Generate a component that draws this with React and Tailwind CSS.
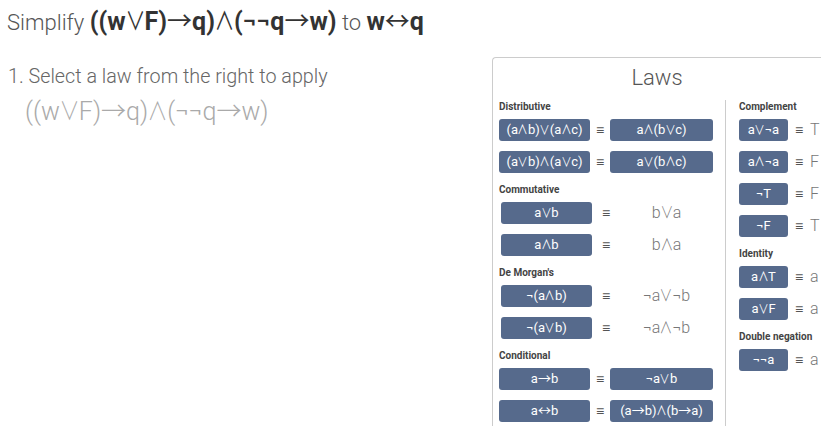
const SYM = /([∧∨→↔])/

// operator glyphs come from the CJK font: thin, with long arrows like the reference.
// its ∧ / ∨ are too wide, so they get squeezed a little
function Expr({ text, weight = 'font-normal' }) {
  return text.split(SYM).map((part, i) => {
    if (part === '∧' || part === '∨') {
      return (
        <span key={i} className={`inline-block leading-none scale-x-[0.8] -mx-[0.12em] font-['Noto_Sans_CJK_SC',sans-serif] ${weight}`}>
          {part}
        </span>
      )
    }
    if (part === '→' || part === '↔') {
      return (
        <span key={i} className={`inline-block leading-none font-['Noto_Sans_CJK_SC',sans-serif] ${weight}`}>
          {part}
        </span>
      )
    }
    return part
  })
}

const leftGroups = [
  {
    name: 'Distributive',
    rows: [
      { lhs: '(a∧b)∨(a∧c)', rhs: 'a∧(b∨c)', button: true },
      { lhs: '(a∨b)∧(a∨c)', rhs: 'a∨(b∧c)', button: true },
    ],
  },
  {
    name: 'Commutative',
    rows: [
      { lhs: 'a∨b', rhs: 'b∨a' },
      { lhs: 'a∧b', rhs: 'b∧a' },
    ],
  },
  {
    name: "De Morgan's",
    rows: [
      { lhs: '¬(a∧b)', rhs: '¬a∨¬b' },
      { lhs: '¬(a∨b)', rhs: '¬a∧¬b' },
    ],
  },
  {
    name: 'Conditional',
    rows: [
      { lhs: 'a→b', rhs: '¬a∨b', button: true },
      { lhs: 'a↔b', rhs: '(a→b)∧(b→a)', button: true },
    ],
  },
]

const rightGroups = [
  {
    name: 'Complement',
    rows: [
      { lhs: 'a∨¬a', rhs: 'T' },
      { lhs: 'a∧¬a', rhs: 'F' },
      { lhs: '¬T', rhs: 'F' },
      { lhs: '¬F', rhs: 'T' },
    ],
  },
  {
    name: 'Identity',
    rows: [
      { lhs: 'a∧T', rhs: 'a' },
      { lhs: 'a∨F', rhs: 'a' },
    ],
  },
  {
    name: 'Double negation',
    rows: [{ lhs: '¬¬a', rhs: 'a' }],
  },
]

function LawButton({ text, className }) {
  return (
    <button className={`h-[22px] rounded-[3px] bg-[#566a8c] text-white text-[13px] leading-[22px] text-center whitespace-nowrap ${className}`}>
      <Expr text={text} />
    </button>
  )
}

function GroupLabel({ children, className = '' }) {
  return <div className={`h-[14px] mb-[5px] text-[10px] leading-[14px] font-bold text-[#444] whitespace-nowrap ${className}`}>{children}</div>
}

function LeftRow({ row }) {
  if (row.button) {
    return (
      <div className="flex items-center h-[22px] mb-[10px]">
        <LawButton className="w-[91px]" text={row.lhs} />
        <span className="w-[20px] text-center text-[14px] text-[#555]">≡</span>
        <LawButton className="w-[103px]" text={row.rhs} />
      </div>
    )
  }
  return (
    <div className="flex items-center h-[22px] mb-[10px] ml-[2px]">
      <LawButton className="w-[91px]" text={row.lhs} />
      <span className="w-[28px] text-center text-[14px] text-[#555]">≡</span>
      <span className="w-[93px] text-center text-[16px] leading-[22px] font-light text-[#777]">
        <Expr text={row.rhs} weight="font-light" />
      </span>
    </div>
  )
}

function RightRow({ row }) {
  return (
    <div className="flex items-center h-[22px] mb-[10px]">
      <LawButton className="w-[49px]" text={row.lhs} />
      <span className="w-[22px] text-center text-[14px] text-[#555]">≡</span>
      <span className="text-[16px] font-light text-[#777]">{row.rhs}</span>
    </div>
  )
}

export default function App() {
  return (
    <div className="w-[835px] h-[426px] overflow-hidden bg-white font-['Roboto','Open_Sans',sans-serif]">
      <div className="h-[50px] pt-[7px] pl-[7px] text-[22px] leading-[30px] whitespace-nowrap">
        <span className="font-light text-[#555]">Simplify </span>
        <span className="font-bold text-[25px] text-[#333]">
          <Expr text="((w∨F)→q)∧(¬¬q→w)" />
        </span>
        <span className="font-light text-[#555]"> to </span>
        <span className="font-bold text-[25px] text-[#333]">
          <Expr text="w↔q" />
        </span>
      </div>

      <div className="flex mt-[7px]">
        <div className="w-[492px] pl-[8px] pt-[8px]">
          <div className="text-[19.75px] leading-[24px] font-light text-[#666]">1. Select a law from the right to apply</div>
          <div className="mt-[7px] pl-[17px] text-[25px] leading-[32px] font-light text-[#aaa]">
            <Expr text="((w∨F)→q)∧(¬¬q→w)" weight="font-light" />
          </div>
        </div>

        <div className="w-[329px] h-[380px] border-l border-t border-[#ccc] rounded-tl-[4px]">
          <div className="pt-[5px] h-[42px] text-center text-[22px] leading-[30px] font-light text-[#555]">Laws</div>
          <div className="flex">
            <div className="w-[232px] pl-[6px]">
              {leftGroups.map((g) => (
                <div key={g.name}>
                  <GroupLabel>{g.name}</GroupLabel>
                  {g.rows.map((r) => (
                    <LeftRow key={r.lhs} row={r} />
                  ))}
                </div>
              ))}
            </div>
            <div className="flex-1 border-l border-[#ccc] pl-[13px] h-[340px]">
              {rightGroups.map((g, i) => (
                <div key={g.name}>
                  <GroupLabel className={i > 0 ? 'mt-[2px]' : ''}>{g.name}</GroupLabel>
                  {g.rows.map((r) => (
                    <RightRow key={r.lhs} row={r} />
                  ))}
                </div>
              ))}
            </div>
          </div>
        </div>
      </div>
    </div>
  )
}
